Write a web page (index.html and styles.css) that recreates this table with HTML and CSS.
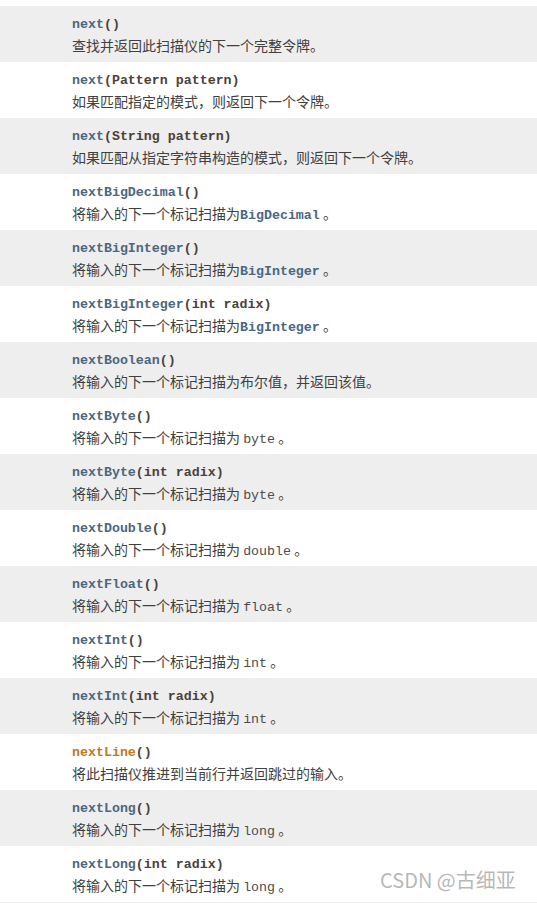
FILE: index.html
```html
<!DOCTYPE html>
<html lang="zh-CN">
<head>
    <meta charset="UTF-8">
    <title>Scanner methods</title>
    <link rel="stylesheet" href="styles.css">
</head>
<body>
    <div class="method-list">
        <div class="row alt">
            <code class="sig"><span class="name">next</span>()</code>
            <div class="desc">查找并返回此扫描仪的下一个完整令牌。</div>
        </div>
        <div class="row">
            <code class="sig"><span class="name">next</span>(Pattern pattern)</code>
            <div class="desc">如果匹配指定的模式，则返回下一个令牌。</div>
        </div>
        <div class="row alt">
            <code class="sig"><span class="name">next</span>(String pattern)</code>
            <div class="desc">如果匹配从指定字符串构造的模式，则返回下一个令牌。</div>
        </div>
        <div class="row">
            <code class="sig"><span class="name">nextBigDecimal</span>()</code>
            <div class="desc">将输入的下一个标记扫描为<code class="link">BigDecimal</code> 。</div>
        </div>
        <div class="row alt">
            <code class="sig"><span class="name">nextBigInteger</span>()</code>
            <div class="desc">将输入的下一个标记扫描为<code class="link">BigInteger</code> 。</div>
        </div>
        <div class="row">
            <code class="sig"><span class="name">nextBigInteger</span>(int radix)</code>
            <div class="desc">将输入的下一个标记扫描为<code class="link">BigInteger</code> 。</div>
        </div>
        <div class="row alt">
            <code class="sig"><span class="name">nextBoolean</span>()</code>
            <div class="desc">将输入的下一个标记扫描为布尔值，并返回该值。</div>
        </div>
        <div class="row">
            <code class="sig"><span class="name">nextByte</span>()</code>
            <div class="desc">将输入的下一个标记扫描为 <code>byte</code> 。</div>
        </div>
        <div class="row alt">
            <code class="sig"><span class="name">nextByte</span>(int radix)</code>
            <div class="desc">将输入的下一个标记扫描为 <code>byte</code> 。</div>
        </div>
        <div class="row">
            <code class="sig"><span class="name">nextDouble</span>()</code>
            <div class="desc">将输入的下一个标记扫描为 <code>double</code> 。</div>
        </div>
        <div class="row alt">
            <code class="sig"><span class="name">nextFloat</span>()</code>
            <div class="desc">将输入的下一个标记扫描为 <code>float</code> 。</div>
        </div>
        <div class="row">
            <code class="sig"><span class="name">nextInt</span>()</code>
            <div class="desc">将输入的下一个标记扫描为 <code>int</code> 。</div>
        </div>
        <div class="row alt">
            <code class="sig"><span class="name">nextInt</span>(int radix)</code>
            <div class="desc">将输入的下一个标记扫描为 <code>int</code> 。</div>
        </div>
        <div class="row">
            <code class="sig"><span class="name visited">nextLine</span>()</code>
            <div class="desc">将此扫描仪推进到当前行并返回跳过的输入。</div>
        </div>
        <div class="row alt">
            <code class="sig"><span class="name">nextLong</span>()</code>
            <div class="desc">将输入的下一个标记扫描为 <code>long</code> 。</div>
        </div>
        <div class="row">
            <code class="sig"><span class="name">nextLong</span>(int radix)</code>
            <div class="desc">将输入的下一个标记扫描为 <code>long</code> 。</div>
        </div>
        <div class="row alt"></div>
    </div>

    <div class="watermark">CSDN @古细亚</div>
</body>
</html>
```

FILE: styles.css
```css
body {
    margin: 0;
    padding-top: 6px;
    background: #fff;
    color: #353833;
    font-family: "Noto Sans CJK SC", sans-serif;
    font-size: 14px;
    overflow: hidden;
    height: 903px;
    box-sizing: border-box;
    position: relative;
}

.row {
    height: 56px;
    box-sizing: border-box;
    padding: 9px 0 0 72px;
    background: #fff;
}

.row.alt {
    background: #eeeeee;
}

code {
    font-family: "Liberation Mono", "Courier New", monospace;
    font-size: 13.3px;
    color: #4d4d4d;
}

.sig {
    display: block;
    height: 20px;
    line-height: 20px;
    font-weight: bold;
    color: #4a4238;
}

.name {
    color: #4a6782;
}

.name.visited {
    color: #bb7a2a;
}

.desc {
    height: 20px;
    line-height: 20px;
    color: #404040;
    white-space: nowrap;
}

.desc .link {
    font-weight: bold;
    color: #4a6782;
}

.watermark {
    position: absolute;
    left: 380px;
    top: 868px;
    font-family: "Noto Sans CJK SC", sans-serif;
    font-size: 20px;
    line-height: 24px;
    color: rgba(120, 120, 120, 0.55);
}
```
